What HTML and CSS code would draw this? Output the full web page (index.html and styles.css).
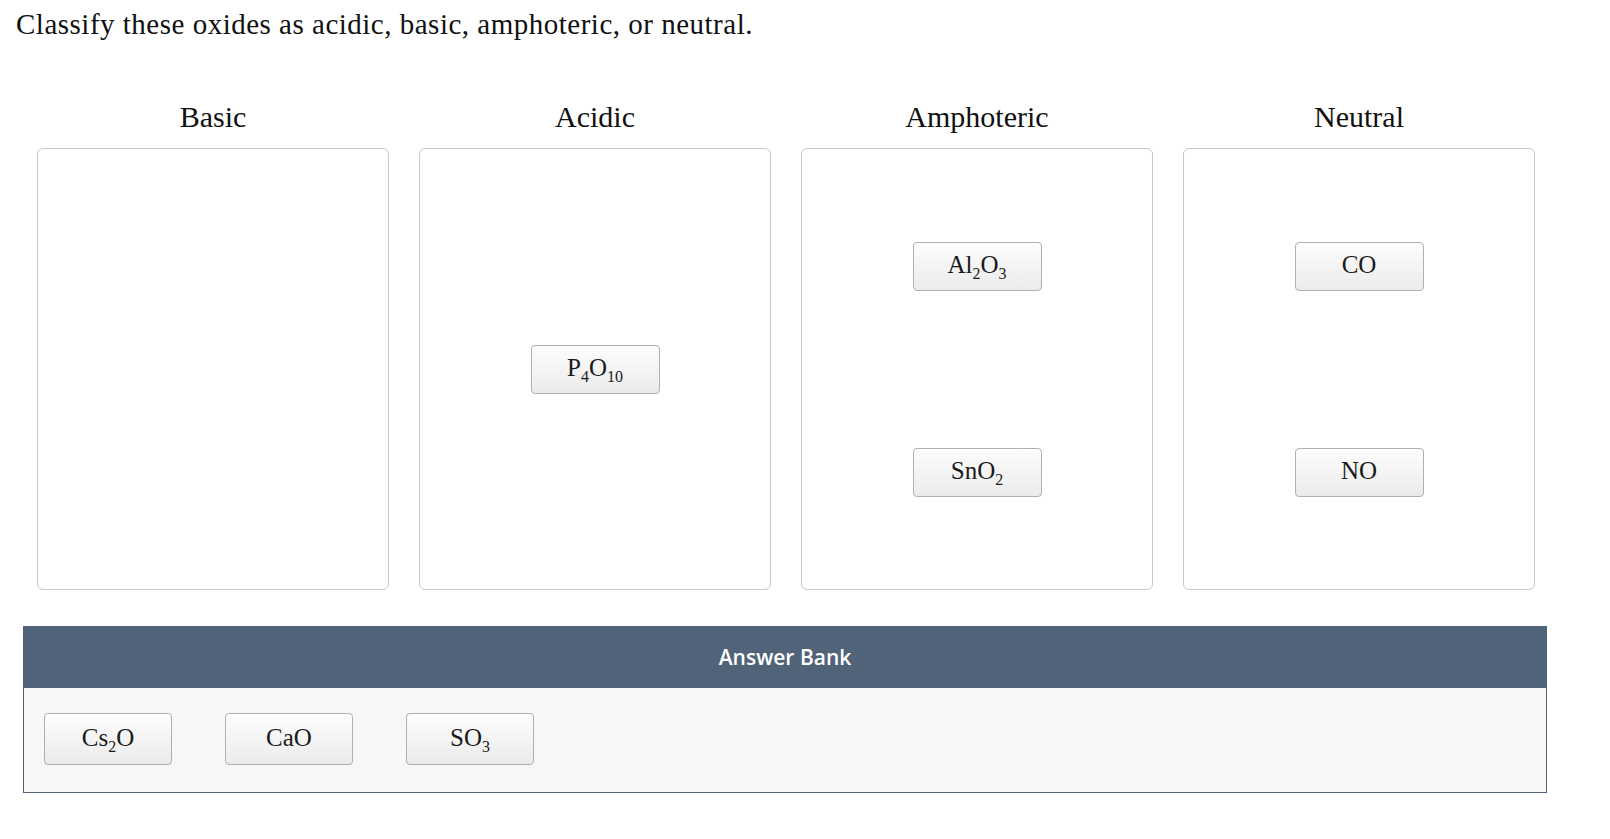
FILE: index.html
```html
<!DOCTYPE html>
<html lang="en">
<head>
    <meta charset="UTF-8">
    <title>Classify Oxides</title>
    <link rel="stylesheet" href="styles.css">
</head>
<body>
    <p class="prompt">Classify these oxides as acidic, basic, amphoteric, or neutral.</p>

    <div class="bins">
        <div class="bin">
            <div class="bin-title">Basic</div>
            <div class="bin-box"></div>
        </div>
        <div class="bin">
            <div class="bin-title">Acidic</div>
            <div class="bin-box">
                <div class="chip"><span>P<sub>4</sub>O<sub>10</sub></span></div>
            </div>
        </div>
        <div class="bin">
            <div class="bin-title">Amphoteric</div>
            <div class="bin-box">
                <div class="chip"><span>Al<sub>2</sub>O<sub>3</sub></span></div>
                <div class="chip"><span>SnO<sub>2</sub></span></div>
            </div>
        </div>
        <div class="bin">
            <div class="bin-title">Neutral</div>
            <div class="bin-box">
                <div class="chip"><span>CO</span></div>
                <div class="chip"><span>NO</span></div>
            </div>
        </div>
    </div>

    <div class="bank">
        <div class="bank-header">Answer Bank</div>
        <div class="bank-body">
            <div class="chip"><span>Cs<sub>2</sub>O</span></div>
            <div class="chip"><span>CaO</span></div>
            <div class="chip"><span>SO<sub>3</sub></span></div>
        </div>
    </div>
</body>
</html>
```

FILE: styles.css
```css
body {
    margin: 0;
    padding: 0 16px;
    font-family: "Liberation Serif", "Times New Roman", serif;
    color: #111;
    background: #fff;
}
.prompt {
    font-size: 29px;
    letter-spacing: 0.5px;
    margin: 6px 0 0;
    line-height: 36px;
}
.bins {
    display: flex;
    gap: 30px;
    margin: 55px 0 0 21px;
}
.bin {
    width: 352px;
}
.bin-title {
    text-align: center;
    font-size: 30px;
    line-height: 40px;
    height: 51px;
}
.bin-box {
    box-sizing: border-box;
    height: 442px;
    border: 1px solid #c8c8c8;
    border-radius: 6px;
    padding: 14px 0;
    display: flex;
    flex-direction: column;
    align-items: center;
    justify-content: space-around;
}
.chip {
    box-sizing: border-box;
    width: 129px;
    height: 49px;
    border: 1px solid #b0b0b0;
    border-radius: 4px;
    background: linear-gradient(#fdfdfd, #ebebeb);
    font-size: 25px;
    color: #1a1a1a;
    display: flex;
    align-items: center;
    justify-content: center;
    padding-bottom: 3px;
}
.chip sub {
    font-size: 16px;
    vertical-align: -6px;
    line-height: 0;
}
.bank {
    margin: 36px 47px 0 7px;
    border: 1px solid #506379;
}
.bank-header {
    background: #506379;
    color: #fff;
    font-family: "Open Sans", sans-serif;
    font-weight: 600;
    font-size: 21px;
    text-align: center;
    height: 61px;
    line-height: 61px;
}
.bank-body {
    background: #f7f7f7;
    display: flex;
    gap: 53px;
    padding: 25px 20px 27px;
}
.bank-body .chip {
    width: 128px;
    height: 52px;
}
```
